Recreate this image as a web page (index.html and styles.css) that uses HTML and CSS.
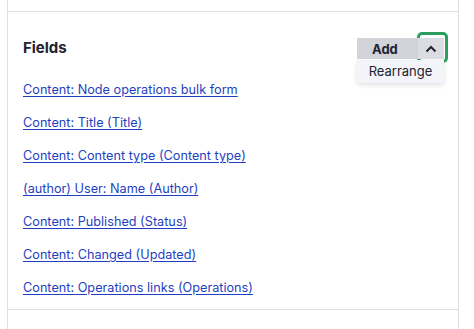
FILE: index.html
```html
<!DOCTYPE html>
<html lang="en">

<head>
    <meta charset="UTF-8">
    <meta name="viewport" content="width=device-width, initial-scale=1.0">
    <title>Fields</title>
    <link rel="stylesheet" href="styles.css">
</head>

<body>
    <div class="panel">
        <div class="section section-top"></div>

        <!-- Fields section -->
        <div class="section">
            <div class="section-header">
                <h3>Fields</h3>
                <div class="dropbutton">
                    <span class="focus-ring"></span>
                    <button class="drop-main">Add</button>
                    <button class="drop-toggle">
                        <svg width="12" height="8" viewBox="0 0 12 8">
                            <path d="M1.5 6.5 L6 2 L10.5 6.5" fill="none" stroke="#222330" stroke-width="2" />
                        </svg>
                    </button>
                    <ul class="drop-menu">
                        <li><a href="#">Rearrange</a></li>
                    </ul>
                </div>
            </div>

            <ul class="field-list">
                <li><a href="#">Content: Node operations bulk form</a></li>
                <li><a href="#">Content: Title (Title)</a></li>
                <li><a href="#">Content: Content type (Content type)</a></li>
                <li><a href="#">(author) User: Name (Author)</a></li>
                <li><a href="#">Content: Published (Status)</a></li>
                <li><a href="#">Content: Changed (Updated)</a></li>
                <li><a href="#">Content: Operations links (Operations)</a></li>
            </ul>
        </div>

        <div class="section section-bottom"></div>
    </div>
</body>

</html>
```

FILE: styles.css
```css
/* Global Styles */
body {
    font-family: Inter, "Noto Sans", sans-serif;
    margin: 0;
    padding: 0;
    background-color: #ffffff;
    color: #222330;
    overflow: hidden;
}

.panel {
    margin-left: 7px;
    width: 452px;
}

.section {
    border-left: 1px solid #dedfe4;
    border-right: 1px solid #dedfe4;
    border-bottom: 1px solid #dedfe4;
    padding: 26px 14px 11px 15px;
}

.section-top {
    height: 11px;
    padding: 0;
}

.section-bottom {
    height: 19px;
    padding: 0;
    border-bottom: none;
}

/* Header row */
.section-header {
    display: flex;
    justify-content: space-between;
    align-items: center;
    height: 21px;
}

.section-header h3 {
    margin: 0 0 2px 0;
    font-size: 15px;
    font-weight: 700;
}

/* Dropbutton */
.dropbutton {
    position: relative;
    display: flex;
}

.dropbutton button {
    border: none;
    margin: 0;
    font-family: inherit;
    color: #222330;
}

.drop-main {
    position: relative;
    z-index: 2;
    width: 61px;
    height: 21px;
    padding: 0 0 0 15px;
    text-align: left;
    font-size: 13px;
    font-weight: 700;
    background-color: #d3d4d9;
}

.drop-toggle {
    position: relative;
    z-index: 2;
    width: 26px;
    height: 21px;
    padding: 0;
    background-color: #dcdde2;
    display: flex;
    align-items: center;
    justify-content: center;
}

.focus-ring {
    position: absolute;
    z-index: 1;
    top: -6px;
    left: 60px;
    width: 25px;
    height: 25px;
    border: 3px solid #2c9f5f;
    border-radius: 5px;
}

.drop-menu {
    position: absolute;
    z-index: 3;
    top: 22px;
    left: 0;
    width: 87px;
    margin: 0;
    padding: 0;
    list-style-type: none;
    background-color: #f3f4f9;
    box-shadow: 0 2px 5px rgba(0, 0, 0, 0.12);
}

.drop-menu a {
    display: block;
    height: 23px;
    line-height: 23px;
    text-align: center;
    font-size: 13px;
    color: #222330;
    text-decoration: none;
}

/* Field links */
.field-list {
    list-style-type: none;
    margin: 21px 0 0 0;
    padding: 0;
    display: flex;
    flex-direction: column;
    gap: 13px;
}

.field-list li {
    font-size: 12.7px;
    line-height: 20px;
}

.field-list a {
    color: #1f3fc2;
    text-decoration: underline;
    text-underline-offset: 2px;
}
```
